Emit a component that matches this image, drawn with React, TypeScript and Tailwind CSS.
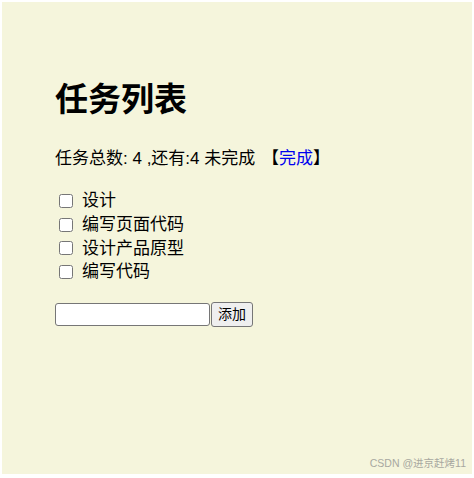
import { useState } from "react";

const font = { fontFamily: '"Liberation Sans", "Noto Sans CJK SC", sans-serif' };

export default function App() {
  const [todos] = useState([
    { id: 1, title: "设计", done: false },
    { id: 2, title: "编写页面代码", done: false },
    { id: 3, title: "设计产品原型", done: false },
    { id: 4, title: "编写代码", done: false },
  ]);
  const left = todos.filter((t) => !t.done).length;

  return (
    <div className="h-[478px] w-[474px] bg-white p-[2px] pb-[4px]">
      <div
        className="relative h-full w-full bg-[#f5f5dc] pl-[53px] pt-[75px] text-[17px] text-black"
        style={font}
      >
        <h1 className="text-[33px] font-bold leading-[46px]">任务列表</h1>
        <p className="mt-[22px] leading-[28px]">
          任务总数: {todos.length} ,还有:{left} 未完成{"  "}
          <span className="ml-[2px]">
            【<a className="text-[#0000ee]">完成</a>】
          </span>
        </p>
        <ul className="mt-[16px]">
          {todos.map((t) => (
            <li key={t.id} className="flex h-[23.7px] items-center">
              <input type="checkbox" className="ml-[4px] mr-[9px] h-[14px] w-[14px]" />
              <span className="leading-[23px]">{t.title}</span>
            </li>
          ))}
        </ul>
        <div className="mt-[18px] flex items-center">
          <input
            type="text"
            className="h-[23px] w-[155px] rounded-[3px] border border-[#767676] bg-white"
          />
          <button className="ml-[1px] h-[25px] rounded-[3px] border border-[#767676] bg-[#efefef] px-[6px] text-[14px] leading-none">
            添加
          </button>
        </div>
        <div className="absolute bottom-[2px] right-[6px] text-[10.5px] text-[#a8a8a0]">
          CSDN @进京赶烤11
        </div>
      </div>
    </div>
  );
}
